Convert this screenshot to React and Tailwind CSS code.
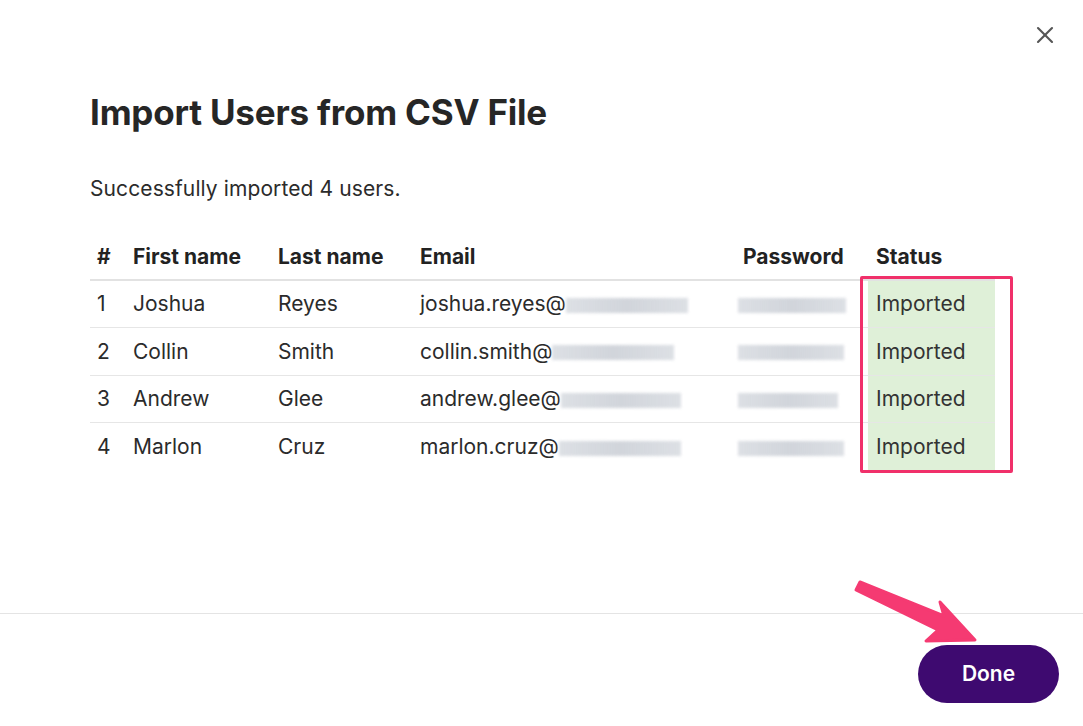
import { X } from 'lucide-react';

const users = [
  { n: 1, first: 'Joshua', last: 'Reyes', email: 'joshua.reyes@', blur: 122, pw: 108 },
  { n: 2, first: 'Collin', last: 'Smith', email: 'collin.smith@', blur: 122, pw: 106 },
  { n: 3, first: 'Andrew', last: 'Glee', email: 'andrew.glee@', blur: 120, pw: 100 },
  { n: 4, first: 'Marlon', last: 'Cruz', email: 'marlon.cruz@', blur: 122, pw: 106 },
];

function Blur({ width }) {
  return (
    <span
      className="inline-block h-[15px] align-middle bg-gradient-to-r from-gray-300 via-gray-400/60 to-gray-300 blur-[1.5px] opacity-75"
      style={{ width }}
    />
  );
}

export default function App() {
  return (
    <div className="relative w-[1083px] h-[726px] bg-white text-[#2b2b2b] overflow-hidden" style={{ fontFamily: 'Inter, "Noto Sans", sans-serif' }}>
      <button className="absolute right-[24px] top-[21px] text-[#555]">
        <X size={28} strokeWidth={1.8} />
      </button>

      <div className="h-[613px] pl-[90px] pr-[88px] pt-[89px]">
        <h1 className="text-[35px] font-bold tracking-[-0.2px] text-[#262626] leading-[46px]">Import Users from CSV File</h1>
        <p className="mt-[41px] text-[21px] tracking-[0.1px] leading-[26px]">Successfully imported 4 users.</p>

        <table className="mt-[32px] border-collapse text-[21px]">
          <thead>
            <tr className="border-b-2 border-[#e2e2e2] h-[46px] text-[#222]">
              <th className="w-[35px] pl-[7px] text-left font-bold">#</th>
              <th className="w-[145px] pl-[8px] text-left font-bold">First name</th>
              <th className="w-[142px] pl-[8px] text-left font-bold">Last name</th>
              <th className="w-[323px] pl-[8px] text-left font-bold">Email</th>
              <th className="w-[133px] pl-[8px] text-left font-bold">Password</th>
              <th className="w-[127px] pl-[8px] text-left font-bold">Status</th>
            </tr>
          </thead>
          <tbody>
            {users.map((u, i) => (
              <tr key={u.n} className={`h-[47.5px] ${i < users.length - 1 ? 'border-b border-[#e6e6e6]' : ''}`}>
                <td className="pl-[7px]">{u.n}</td>
                <td className="pl-[8px]">{u.first}</td>
                <td className="pl-[8px]">{u.last}</td>
                <td className="pl-[8px] whitespace-nowrap">
                  {u.email}
                  <Blur width={u.blur} />
                </td>
                <td className="pl-[3px]">
                  <Blur width={u.pw} />
                </td>
                <td className="pl-[8px] bg-[#dff0d8] text-[#333]">Imported</td>
              </tr>
            ))}
          </tbody>
        </table>
      </div>

      <div className="border-t border-[#e4e4e4] flex justify-end pr-[24px] pt-[31px]">
        <button className="w-[141px] h-[58px] rounded-full bg-[#3e0a70] text-white text-[21px] font-semibold">Done</button>
      </div>

      {/* annotation box */}
      <div className="absolute left-[860px] top-[276px] w-[153px] h-[197px] border-[3px] border-[#f0306a] rounded-[2px]" />

      {/* annotation arrow */}
      <svg className="absolute left-[850px] top-[574px]" width="140" height="80" viewBox="0 0 140 80">
        <path d="M10 8 L94 42 L90 28 L125 66 L76 67 L88 56 L6 16 Z" fill="#f53a72" stroke="#f53a72" strokeWidth="3" strokeLinejoin="round" />
      </svg>
    </div>
  );
}
